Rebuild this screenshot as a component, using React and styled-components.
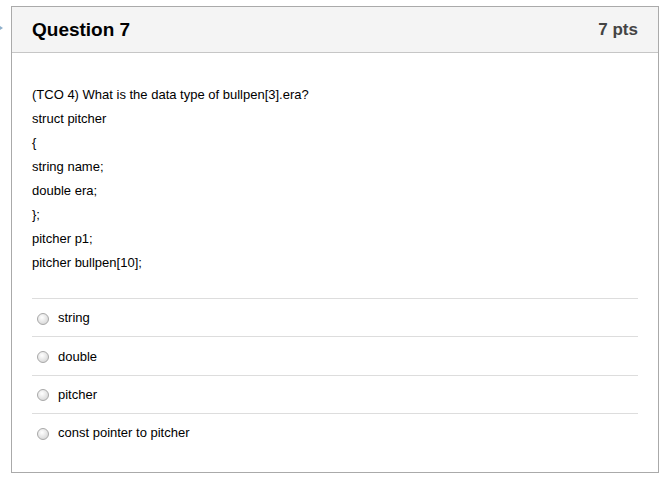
import React from "react";
import styled, { createGlobalStyle } from "styled-components";

const Global = createGlobalStyle`
  html, body { margin: 0; padding: 0; background: #fff; }
  body { font-family: "Liberation Sans", Arial, sans-serif; color: #000; }
`;

const Page = styled.div`
  position: relative;
  padding: 6px 0 0 11px;
`;

const Marker = styled.div`
  position: absolute;
  left: 0;
  top: 26px;
  width: 0;
  height: 0;
  border-top: 2px solid transparent;
  border-bottom: 2px solid transparent;
  border-left: 3px solid #8fb0cc;
`;

const Card = styled.div`
  box-sizing: border-box;
  width: 648px;
  height: 467px;
  border: 1px solid #aaa;
  background: #fff;
`;

const Header = styled.div`
  box-sizing: border-box;
  height: 46px;
  display: flex;
  align-items: center;
  justify-content: space-between;
  padding: 1px 20px 0 20px;
  background: #f4f4f4;
  border-bottom: 1px solid #c6c6c6;
`;

const Title = styled.h2`
  margin: 0;
  font-size: 19px;
  font-weight: bold;
  color: #000;
`;

const Points = styled.span`
  font-size: 17px;
  font-weight: bold;
  color: #444;
`;

const Body = styled.div`
  padding: 30px 20px 0 20px;
`;

const Line = styled.div`
  font-size: 13px;
  line-height: 24px;
`;

const Options = styled.div`
  margin-top: 23px;
`;

const Option = styled.label`
  display: flex;
  align-items: center;
  gap: 9px;
  height: 37.4px;
  border-top: 1px solid #ddd;
  padding-left: 5px;
  font-size: 13px;
  cursor: pointer;
`;

const Radio = styled.span`
  box-sizing: border-box;
  width: 12px;
  height: 12px;
  border-radius: 50%;
  border: 1px solid #a8a8a8;
  background: radial-gradient(circle at 40% 35%, #ffffff 0%, #e4e4e4 55%, #cfcfcf 100%);
  flex: none;
  margin-top: 2px;
`;

const lines = [
  "(TCO 4) What is the data type of bullpen[3].era?",
  "struct pitcher",
  "{",
  "string name;",
  "double era;",
  "};",
  "pitcher p1;",
  "pitcher bullpen[10];",
];

const choices = ["string", "double", "pitcher", "const pointer to pitcher"];

export default function App() {
  return (
    <>
      <Global />
      <Page>
        <Marker />
        <Card>
          <Header>
            <Title>Question 7</Title>
            <Points>7 pts</Points>
          </Header>
          <Body>
            {lines.map((l, i) => (
              <Line key={i}>{l}</Line>
            ))}
            <Options>
              {choices.map((c) => (
                <Option key={c}>
                  <Radio />
                  {c}
                </Option>
              ))}
            </Options>
          </Body>
        </Card>
      </Page>
    </>
  );
}
